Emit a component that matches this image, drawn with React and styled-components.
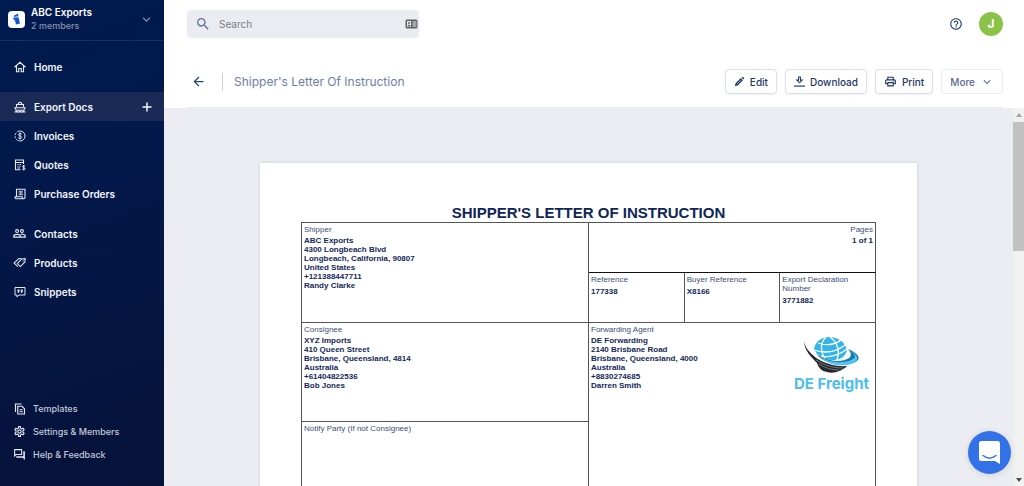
import React from 'react';
import styled, {createGlobalStyle} from 'styled-components';
import {
    MdArrowBack,
    MdHelpOutline,
    MdKeyboardArrowDown,
    MdOutlinePrint,
    MdOutlineQuestionAnswer,
    MdOutlineSettings,
    MdSearch
} from 'react-icons/md';

const GlobalStyle = createGlobalStyle`
    * {
        box-sizing: border-box;
    }

    body {
        margin: 0;
        font-family: Inter, "Liberation Sans", sans-serif;
        color: #17305f;
        background: #ffffff;
    }

    h1, h2, h3, p, ul {
        margin: 0;
        padding: 0;
    }

    button, input {
        font-family: inherit;
    }

    svg {
        display: block;
        flex-shrink: 0;
    }
`;

const Layout = styled.div`
    display: flex;
    height: 100vh;
`;

const Sidebar = styled.aside`
    display: flex;
    flex-direction: column;
    flex: 0 0 164px;
    padding-bottom: 20px;
    color: #ffffff;
    background: linear-gradient(160deg, #001b50 0%, #03184a 40%, #061238 100%);
`;

const Account = styled.button`
    display: flex;
    align-items: center;
    flex-shrink: 0;
    height: 41px;
    padding: 0 10px 2px 8px;
    border: 0;
    border-bottom: 1px solid #1b2f5e;
    color: #ffffff;
    background: transparent;
    text-align: left;
`;

const AccountLogo = styled.span`
    display: flex;
    align-items: center;
    justify-content: center;
    width: 17px;
    height: 17px;
    margin-right: 6px;
    border-radius: 4px;
    background: #ffffff;
`;

const AccountText = styled.span`
    flex: 1;
    font-size: 10px;
    line-height: 14px;
    font-weight: 600;
`;

const Members = styled.span`
    display: block;
    font-size: 9px;
    font-weight: 500;
    color: #8490ae;
`;

const NavList = styled.ul`
    list-style: none;
    margin-top: ${props => props.$push ? 'auto' : '11px'};
`;

const NavLink = styled.a`
    display: flex;
    align-items: center;
    gap: ${props => props.$small ? '7px' : '8px'};
    height: ${props => props.$small ? '23px' : '29px'};
    padding: 0 11px 0 13px;
    font-size: ${props => props.$small ? '9px' : '10px'};
    font-weight: ${props => props.$small ? 500 : 600};
    color: ${props => props.$small ? '#c3c9d8' : '#f3f5fa'};
    background: ${props => props.$active ? '#192a57' : 'transparent'};
    text-decoration: none;
    white-space: nowrap;
`;

const NavIcon = styled.span`
    display: flex;
    justify-content: center;
    width: 13px;
    color: #e6e9f2;
`;

const NavLabel = styled.span`
    flex: 1;
`;

const Main = styled.main`
    display: flex;
    flex-direction: column;
    flex: 1;
    min-width: 0;
`;

const Header = styled.header`
    padding: 0 21px 0 23px;
`;

const TopBar = styled.div`
    display: flex;
    align-items: center;
    height: 47px;
`;

const SearchBox = styled.label`
    display: flex;
    align-items: center;
    width: 232px;
    height: 28px;
    padding: 0 1px 0 8px;
    border-radius: 4px;
    color: #5e7099;
    background: #ebecf1;
`;

const SearchInput = styled.input`
    flex: 1;
    min-width: 0;
    padding: 0 8px;
    border: 0;
    outline: 0;
    background: transparent;
    font-size: 10px;
    color: #17305f;

    &::placeholder {
        color: #7b7d82;
        opacity: 1;
    }
`;

const IconButton = styled.button`
    display: flex;
    padding: 0;
    border: 0;
    color: #27417c;
    background: transparent;
`;

const UserArea = styled.div`
    display: flex;
    align-items: center;
    gap: 16px;
    margin-left: auto;
`;

const Avatar = styled.button`
    width: 24px;
    height: 24px;
    padding: 0;
    border: 0;
    border-radius: 50%;
    font-size: 12px;
    font-weight: 700;
    color: #ffffff;
    background: #8bc34a;
`;

const Toolbar = styled.div`
    display: flex;
    align-items: center;
    gap: 8px;
    height: 61px;
    padding: 9px 0 0 4px;
    border-bottom: 1px solid #ebecf1;
`;

const PageTitle = styled.h1`
    flex: 1;
    margin-left: 8px;
    padding-left: 11px;
    border-left: 1px solid #cdd1df;
    font-size: 12px;
    line-height: 18px;
    font-weight: 400;
    color: #6d7da5;
`;

const ActionButton = styled.button`
    display: flex;
    align-items: center;
    gap: 5px;
    height: 25px;
    padding: 0 8px;
    border: 1px solid ${props => props.$light ? '#eaebf0' : '#dcdfe8'};
    border-radius: 4px;
    box-shadow: ${props => props.$light ? 'none' : '0 1px 2px rgba(30, 50, 100, 0.08)'};
    font-size: 10px;
    font-weight: 500;
    color: ${props => props.$light ? '#596b96' : '#1d3568'};
    background: #ffffff;
`;

const Workspace = styled.div`
    display: flex;
    flex: 1;
    min-height: 0;
    background: #ebedf2;
`;

const Canvas = styled.div`
    flex: 1;
    min-width: 0;
    padding: 55px 24px 0;
    overflow: hidden;
`;

const Paper = styled.article`
    max-width: 657px;
    min-height: 900px;
    margin: 0 auto;
    padding: 41px;
    background: #ffffff;
    box-shadow: 0 0 3px rgba(40, 50, 110, 0.2);
    font-family: "Liberation Sans", Arial, sans-serif;
    color: #14285c;
`;

const DocumentTitle = styled.h2`
    font-size: 15px;
    line-height: 18px;
    text-align: center;
    color: #0f2557;
`;

const FormGrid = styled.div`
    display: grid;
    grid-template-columns: 3fr 1fr 1fr 1fr;
    grid-template-rows: 50px 50px 99px 99px;
    border-top: 1px solid #555555;
    border-left: 1px solid #555555;
`;

const Field = styled.section`
    display: flex;
    justify-content: space-between;
    min-width: 0;
    grid-column: ${props => props.$column};
    grid-row: ${props => props.$row};
    padding: 2px 2px 0;
    border-right: 1px solid #555555;
    border-bottom: 1px solid ${props => props.$dark ? '#111111' : '#555555'};
    font-size: 8px;
    line-height: 9px;
    text-align: ${props => props.$align || 'left'};
`;

const FieldBody = styled.div`
    flex: 1;
`;

const FieldLabel = styled.h3`
    margin-bottom: ${props => props.$spaced ? '3px' : '2px'};
    font-size: 8px;
    font-weight: 400;
    color: #3b4d7d;
`;

const FieldLine = styled.p`
    font-weight: 700;
`;

const FreightBrand = styled.div`
    display: flex;
    flex-direction: column;
    align-items: center;
    padding: 12px 4px 0 0;
    font-family: Inter, sans-serif;
    font-size: 15px;
    line-height: 22px;
    font-weight: 700;
    color: #4bbdf0;
    white-space: nowrap;
`;

const ScrollTrack = styled.div`
    display: flex;
    flex-direction: column;
    align-items: center;
    flex: 0 0 11px;
    padding: 5px 0 4px;
    background: #f1f1f1;
`;

const ScrollThumb = styled.div`
    width: 100%;
    height: 35%;
    margin-top: 5px;
    background: #c1c1c1;
`;

const ScrollArrow = styled.span`
    width: 0;
    height: 0;
    border: 3px solid transparent;
    border-top: ${props => props.$down ? '4px solid #505050' : '0'};
    border-bottom: ${props => props.$down ? '0' : '4px solid #a3a3a3'};
    margin-top: ${props => props.$down ? 'auto' : '0'};
`;

const ChatButton = styled.button`
    position: fixed;
    right: 13px;
    bottom: 12px;
    display: flex;
    align-items: center;
    justify-content: center;
    width: 43px;
    height: 43px;
    padding: 0;
    border: 0;
    border-radius: 50%;
    background: #3371e9;
    box-shadow: 0 1px 6px rgba(0, 0, 0, 0.12);
`;

const Outline = ({size = 12, children}) => (
    <svg
        width={size}
        height={size}
        viewBox="0 0 24 24"
        fill="none"
        stroke="currentColor"
        strokeWidth="2"
        aria-hidden="true"
    >
        {children}
    </svg>
);

const HomeIcon = () => (
    <Outline>
        <path d="M1 12.500 12 2.500l11 10M5 10v11.500h4.500V15h5v6.500H19V10" strokeWidth="2.300"/>
    </Outline>
);

const ShipIcon = () => (
    <Outline>
        <path d="M8.500 6.500C8.500 1 15.500 1 15.500 6.500M5 12V7h14v5M2 13.500h20l-2 5H4z" strokeWidth="2.200"/>
        <path d="M1 22c2.500 0 3.500-.5 4.500-1.500 2 2 4.500 2 6.500 0 2 2 4.500 2 6.500 0 1 1 2 1.500 4.500 1.500" strokeWidth="2.200"/>
    </Outline>
);

const InvoiceIcon = () => (
    <Outline>
        <path d="M9 2.500A10 10 0 1 1 9 21.500"/>
        <path d="M9 2.500A10 10 0 0 0 9 21.500" strokeDasharray="4 2.500"/>
        <path d="M15.500 8.500c-.7-1-1.800-1.500-3.300-1.500-4 0-4 4.400-.4 5 4.700.8 4.700 5 0 5-1.700 0-2.800-.6-3.500-1.700M12 5v14"/>
    </Outline>
);

const QuoteIcon = () => (
    <Outline>
        <path d="M13 21.500H3V2h16v8M3 7h16M7 11h2M11 11h3M7 14.500h2M11 14.500h2M7 18h5" strokeWidth="2.200"/>
        <path d="M22 14.500c-1-1.500-5-1.500-5 .8 0 2.200 5 1.500 5 3.900 0 2.300-4 2.300-5.500.6M19.500 12v11"/>
    </Outline>
);

const OrderIcon = () => (
    <Outline>
        <path d="M5 17V2.500h17V19c0 1.500-1 2.500-2.500 2.500H4C2.500 21.500 2 20.500 2 17.500h14c0 2.500 1 4 3.500 4" strokeWidth="2.200"/>
        <path d="M9 6.500h9M9 10h9M9 13.500h9M13.500 6v8" strokeWidth="1.500"/>
    </Outline>
);

const ContactsIcon = () => (
    <Outline size={13}>
        <circle cx="7.500" cy="7.500" r="2.700"/>
        <circle cx="16.500" cy="7.500" r="2.700"/>
        <path d="M1.500 18.500v-2c0-4 12-4 12 0v2zM15 13.500c3-.6 7.500.4 7.500 3v2H14" strokeWidth="2.300"/>
    </Outline>
);

const ProductIcon = () => (
    <Outline size={13}>
        <path d="M8 14 16 5.500 22.500 5 22 11 13.500 19.500z"/>
        <path d="M15 4.500 10.500 5 2 13l7 6.500"/>
        <circle cx="18.500" cy="9" r="1" fill="currentColor" stroke="none"/>
    </Outline>
);

const SnippetIcon = () => (
    <Outline>
        <path d="M2 3h20v15H10l-4 4v-4H2z"/>
        <path d="M7 7h4v4l-2 3H7l1-3H7zM13.500 7h4v4l-2 3h-2l1-3h-1z" fill="currentColor" stroke="none"/>
    </Outline>
);

const TemplateIcon = () => (
    <Outline>
        <path d="M15 2H3v16" strokeWidth="2.300"/>
        <path d="M7.500 6.500H16l5 5V22H7.500zM11 13.500h6.500M11 17.500h6.500" strokeWidth="2.300"/>
    </Outline>
);

const PlusIcon = () => (
    <Outline>
        <path d="M12 3v18M3 12h18" strokeWidth="3"/>
    </Outline>
);

const EditIcon = () => (
    <svg width="11" height="11" viewBox="0 0 24 24" fill="currentColor" aria-hidden="true">
        <path d="M2 22l1.500-6L15 4.500l4.500 4.500L8 20.500zM16.500 3l1.500-1c.7-.5 1.300-.4 1.900.2l1.900 1.900c.6.6.7 1.200.2 1.900l-1 1.500z"/>
        <path d="M6.500 17.500 15.500 8.500" stroke="#ffffff" strokeWidth="1.200"/>
    </svg>
);

const DownloadIcon = () => (
    <Outline size={11}>
        <path d="M10 2h4v7h4l-6 6-6-6h4z" strokeWidth="2.200"/>
        <path d="M0 22h24" strokeWidth="2.500"/>
    </Outline>
);

const ContactCardIcon = () => (
    <svg width="13" height="10" viewBox="0 0 26 20" aria-hidden="true">
        <rect x="1" y="1" width="24" height="18" rx="3" fill="#606164"/>
        <path d="M4 4h8v12H4zM15 5h8v2h-8zM15 9h8v2h-8zM15 13h8v2h-8z" fill="#e7e8ed"/>
        <circle cx="8" cy="8" r="2" fill="#606164"/>
        <path d="M5 15c0-5 6-5 6 0z" fill="#606164"/>
    </svg>
);

const CompanyMark = () => (
    <svg width="9" height="12" viewBox="0 0 18 24" aria-hidden="true">
        <path d="M4 5 12 1l1 5.500-9 1.500z" fill="#1e61dc"/>
        <path d="M1 9.500 13 8.500 16 21l-8 2-2-8z" fill="#1454d4"/>
        <path d="M1 9.500l5 4 2 9.500-2-6z" fill="#67a0ed"/>
    </svg>
);

const GlobeLogo = () => (
    <svg width="55" height="36" viewBox="0 0 55 36" fill="none" aria-hidden="true">
        <path d="M10 12C11 5 17 0 25 0c9 0 16 5 18 13-2 8-8 10-15 10C20 23 13 19 10 12z" fill="#35b4ea"/>
        <g stroke="#ffffff" strokeWidth="1.300">
            <path d="M14 6c8 3 17 2 23-3M10 13c12 4 22 2 31-5M22 0c-6 6-6 13-1 22M26 0c7 5 10 13 7 23M17 19c9 2 17 0 26-7"/>
        </g>
        <path d="M44 12c12 5 14 11 5 14-11 4-26 2-37-9 12 8 26 9 33 4 3-2 2-6-1-9z" fill="#1579b0"/>
        <path d="M46 14c6 4 7 7 0 9.500-9 3-20 2-30-3.500 9 8 20 10 31 7 9-3 8-9-1-13z" fill="#52c4f2"/>
        <path d="M0 4c1 6 5 11 11 16 8 6 20 10 32 9-5 5-13 8-20 6-6-1-8-4-10-9C7 20 0 13 0 4z" fill="#26282d"/>
        <path d="M12 23c8 5 16 8 27 8M15 27c6 4 13 6 20 6" stroke="#74777c"/>
    </svg>
);

const ChatIcon = () => (
    <svg width="21" height="23" viewBox="0 0 21 23" aria-hidden="true">
        <path d="M2.500 0h16A2.500 2.500 0 0 1 21 2.500V23l-5-3H2.500A2.500 2.500 0 0 1 0 17.500v-15A2.500 2.500 0 0 1 2.500 0z" fill="#ffffff"/>
        <path d="M4 14.500c4 3.300 9 3.300 13 0" fill="none" stroke="#3371e9" strokeWidth="1.500" strokeLinecap="round"/>
    </svg>
);

const navGroups = [
    [
        {label: 'Home', icon: <HomeIcon/>}
    ],
    [
        {label: 'Export Docs', icon: <ShipIcon/>, active: true},
        {label: 'Invoices', icon: <InvoiceIcon/>},
        {label: 'Quotes', icon: <QuoteIcon/>},
        {label: 'Purchase Orders', icon: <OrderIcon/>}
    ],
    [
        {label: 'Contacts', icon: <ContactsIcon/>},
        {label: 'Products', icon: <ProductIcon/>},
        {label: 'Snippets', icon: <SnippetIcon/>}
    ]
];

const footerLinks = [
    {label: 'Templates', icon: <TemplateIcon/>},
    {label: 'Settings & Members', icon: <MdOutlineSettings size={13}/>},
    {label: 'Help & Feedback', icon: <MdOutlineQuestionAnswer size={13}/>}
];

const fields = [
    {
        label: 'Shipper', column: '1', row: '1 / 3',
        lines: ['ABC Exports', '4300 Longbeach Blvd', 'Longbeach, California, 90807', 'United States', '+121388447711', 'Randy Clarke']
    },
    {label: 'Pages', column: '2 / 5', row: '1', align: 'right', dark: true, lines: ['1 of 1']},
    {label: 'Reference', column: '2', row: '2', spaced: true, lines: ['177338']},
    {label: 'Buyer Reference', column: '3', row: '2', spaced: true, lines: ['X8166']},
    {label: 'Export Declaration Number', column: '4', row: '2', spaced: true, lines: ['3771882']},
    {
        label: 'Consignee', column: '1', row: '3',
        lines: ['XYZ Imports', '410 Queen Street', 'Brisbane, Queensland, 4814', 'Australia', '+61404822536', 'Bob Jones']
    },
    {
        label: 'Forwarding Agent', column: '2 / 5', row: '3 / 5', brand: true,
        lines: ['DE Forwarding', '2140 Brisbane Road', 'Brisbane, Queensland, 4000', 'Australia', '+8830274685', 'Darren Smith']
    },
    {label: 'Notify Party (If not Consignee)', column: '1', row: '4', lines: []}
];

const NavItem = ({item, small}) => (
    <li>
        <NavLink href="#" $active={item.active} $small={small}>
            <NavIcon>{item.icon}</NavIcon>
            <NavLabel>{item.label}</NavLabel>
            {item.active && <PlusIcon/>}
        </NavLink>
    </li>
);

const ShipperForm = () => (
    <Paper>
        <DocumentTitle>SHIPPER'S LETTER OF INSTRUCTION</DocumentTitle>
        <FormGrid>
            {fields.map(field => (
                <Field
                    key={field.label}
                    $column={field.column}
                    $row={field.row}
                    $align={field.align}
                    $dark={field.dark}
                >
                    <FieldBody>
                        <FieldLabel $spaced={field.spaced}>{field.label}</FieldLabel>
                        {field.lines.map(line => <FieldLine key={line}>{line}</FieldLine>)}
                    </FieldBody>
                    {field.brand && (
                        <FreightBrand>
                            <GlobeLogo/>
                            DE Freight
                        </FreightBrand>
                    )}
                </Field>
            ))}
        </FormGrid>
    </Paper>
);

const App = () => (
    <Layout>
        <GlobalStyle/>
        <Sidebar>
            <Account>
                <AccountLogo><CompanyMark/></AccountLogo>
                <AccountText>ABC Exports<Members>2 members</Members></AccountText>
                <MdKeyboardArrowDown size={15} color="#8490ae"/>
            </Account>
            {navGroups.map(group => (
                <NavList key={group[0].label}>
                    {group.map(item => <NavItem key={item.label} item={item}/>)}
                </NavList>
            ))}
            <NavList $push>
                {footerLinks.map(item => <NavItem key={item.label} item={item} small/>)}
            </NavList>
        </Sidebar>
        <Main>
            <Header>
                <TopBar>
                    <SearchBox>
                        <MdSearch size={16}/>
                        <SearchInput type="text" placeholder="Search" aria-label="Search"/>
                        <ContactCardIcon/>
                    </SearchBox>
                    <UserArea>
                        <IconButton aria-label="Help"><MdHelpOutline size={14}/></IconButton>
                        <Avatar>J</Avatar>
                    </UserArea>
                </TopBar>
                <Toolbar>
                    <IconButton aria-label="Back"><MdArrowBack size={15}/></IconButton>
                    <PageTitle>Shipper's Letter Of Instruction</PageTitle>
                    <ActionButton><EditIcon/>Edit</ActionButton>
                    <ActionButton><DownloadIcon/>Download</ActionButton>
                    <ActionButton><MdOutlinePrint size={13}/>Print</ActionButton>
                    <ActionButton $light>More<MdKeyboardArrowDown size={14}/></ActionButton>
                </Toolbar>
            </Header>
            <Workspace>
                <Canvas>
                    <ShipperForm/>
                </Canvas>
                <ScrollTrack>
                    <ScrollArrow/>
                    <ScrollThumb/>
                    <ScrollArrow $down/>
                </ScrollTrack>
            </Workspace>
        </Main>
        <ChatButton aria-label="Open chat"><ChatIcon/></ChatButton>
    </Layout>
);

export default App;
